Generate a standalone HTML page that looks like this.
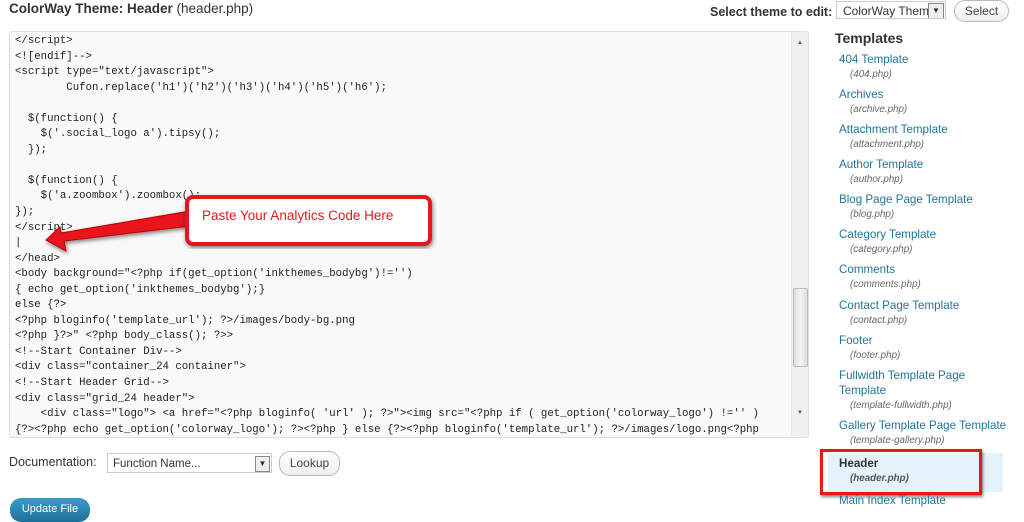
<!DOCTYPE html>
<html><head><style>
body{margin:0;width:1024px;height:512px;overflow:hidden;background:#fff;font-family:"Liberation Sans",sans-serif;position:relative}
.a{position:absolute;white-space:nowrap}
.code{position:absolute;left:9px;top:31px;width:798px;height:405px;border:1px solid #dfdfdf;border-radius:3px;background:#f9f9f9;overflow:hidden}
.code pre{margin:0;position:absolute;left:5px;top:2px;font-family:"Liberation Mono",monospace;font-size:10.7px;line-height:15.55px;color:#222}
.sb{position:absolute;left:781px;top:0;width:16px;height:405px;background:#f0f0f0;border-left:1px solid #e6e6e6}
.thumb{position:absolute;left:1px;top:256px;width:13px;height:77px;background:linear-gradient(90deg,#ddd,#f4f4f4,#ddd);border:1px solid #bbb;border-radius:2px}
.t{color:#21759b;font-size:11.6px}
.f{color:#666;font-size:9.8px;font-style:italic}
</style></head><body>
<div class="a" style="left:9px;top:1px;font-size:13.5px;color:#333"><b>ColorWay Theme: Header</b> (header.php)</div>
<div class="a" style="left:710px;top:5px;font-size:12.5px;color:#333;font-weight:bold">Select theme to edit:</div>
<div class="a" style="left:836px;top:1px;width:110px;height:18px;border:1px solid #ccc;background:#fff;font-size:12px;line-height:18px;padding-left:6px;box-sizing:border-box;color:#333;overflow:hidden">ColorWay Theme<span style="position:absolute;right:1px;top:1px;width:14px;height:14px;border:1px solid #888;background:#eee;font-size:8px;text-align:center;line-height:14px">▼</span></div>
<div class="a" style="left:954px;top:0;width:53px;height:20px;border:1px solid #bbb;border-radius:11px;background:linear-gradient(#fff,#eee);font-size:12px;line-height:20px;text-align:center;color:#464646">Select</div>
<div class="code"><pre>&lt;/script&gt;
&lt;![endif]--&gt;
&lt;script type="text/javascript"&gt;
        Cufon.replace('h1')('h2')('h3')('h4')('h5')('h6');

  $(function() {
    $('.social_logo a').tipsy();
  });

  $(function() {
    $('a.zoombox').zoombox();
});
&lt;/script&gt;
|
&lt;/head&gt;
&lt;body background="&lt;?php if(get_option('inkthemes_bodybg')!='')
{ echo get_option('inkthemes_bodybg');}
else {?&gt;
&lt;?php bloginfo('template_url'); ?&gt;/images/body-bg.png
&lt;?php }?&gt;" &lt;?php body_class(); ?&gt;&gt;
&lt;!--Start Container Div--&gt;
&lt;div class="container_24 container"&gt;
&lt;!--Start Header Grid--&gt;
&lt;div class="grid_24 header"&gt;
    &lt;div class="logo"&gt; &lt;a href="&lt;?php bloginfo( 'url' ); ?&gt;"&gt;&lt;img src="&lt;?php if ( get_option('colorway_logo') !='' )
{?&gt;&lt;?php echo get_option('colorway_logo'); ?&gt;&lt;?php } else {?&gt;&lt;?php bloginfo('template_url'); ?&gt;/images/logo.png&lt;?php</pre>
<div class="sb"><div style="position:absolute;left:5px;top:8px;font-size:6px;color:#555">▲</div><div class="thumb"></div><div style="position:absolute;left:5px;top:378px;font-size:6px;color:#555">▼</div></div>
</div>
<svg class="a" style="left:0;top:0" width="1024" height="512">
<defs><filter id="s"><feDropShadow dx="1" dy="2" stdDeviation="2" flood-opacity=".5"/></filter></defs>
<polygon points="190,211 190,226 64,241 66,251 46,240 60,227 61,233" fill="#e8171b" stroke="#b00" stroke-width="1" filter="url(#s)"/>
<rect x="187" y="197" width="243" height="47" rx="6" fill="#fff" stroke="#e8171b" stroke-width="4" filter="url(#s)"/>
</svg>
<div class="a" style="left:202px;top:208px;font-size:13.5px;color:#e8171b">Paste Your Analytics Code Here</div>
<div class="a" style="left:9px;top:455px;font-size:12.5px;color:#333">Documentation:</div>
<div class="a" style="left:107px;top:453px;width:165px;height:20px;border:1px solid #ccc;background:#fff;font-size:11.5px;line-height:20px;padding-left:5px;box-sizing:border-box;color:#333">Function Name...<span style="position:absolute;right:1px;top:2px;width:13px;height:14px;border:1px solid #888;background:#eee;font-size:8px;text-align:center;line-height:14px">▼</span></div>
<div class="a" style="left:279px;top:451px;width:59px;height:23px;border:1px solid #bbb;border-radius:11px;background:linear-gradient(#fff,#eee);font-size:12px;line-height:23px;text-align:center;color:#464646">Lookup</div>
<div class="a" style="left:10px;top:498px;width:80px;height:24px;border-radius:11px;background:linear-gradient(#3a9dc9,#1f6f98);color:#fff;font-size:11px;line-height:22px;text-align:center">Update File</div>
<div class="a" style="left:835px;top:30px;font-size:14px;font-weight:bold;color:#333">Templates</div>
<div class="a" style="left:828px;top:453px;width:175px;height:39px;background:#e4f2fc"></div>
<div class="a" style="left:820px;top:449px;width:156px;height:40px;border:3px solid #e8171b;box-shadow:1px 2px 3px rgba(0,0,0,.5)"></div>
<div class="a t" style="left:839px;top:53px">404 Template</div><div class="a f" style="left:850px;top:69px">(404.php)</div>
<div class="a t" style="left:839px;top:88px">Archives</div><div class="a f" style="left:850px;top:104px">(archive.php)</div>
<div class="a t" style="left:839px;top:123px">Attachment Template</div><div class="a f" style="left:850px;top:139px">(attachment.php)</div>
<div class="a t" style="left:839px;top:158px">Author Template</div><div class="a f" style="left:850px;top:174px">(author.php)</div>
<div class="a t" style="left:839px;top:193px">Blog Page Page Template</div><div class="a f" style="left:850px;top:209px">(blog.php)</div>
<div class="a t" style="left:839px;top:228px">Category Template</div><div class="a f" style="left:850px;top:244px">(category.php)</div>
<div class="a t" style="left:839px;top:263px">Comments</div><div class="a f" style="left:850px;top:279px">(comments.php)</div>
<div class="a t" style="left:839px;top:299px">Contact Page Template</div><div class="a f" style="left:850px;top:315px">(contact.php)</div>
<div class="a t" style="left:839px;top:334px">Footer</div><div class="a f" style="left:850px;top:350px">(footer.php)</div>
<div class="a t" style="left:839px;top:369px">Fullwidth Template Page</div><div class="a t" style="left:839px;top:384px">Template</div><div class="a f" style="left:850px;top:400px">(template-fullwidth.php)</div>
<div class="a t" style="left:839px;top:419px">Gallery Template Page Template</div><div class="a f" style="left:850px;top:435px">(template-gallery.php)</div>
<div class="a" style="left:839px;top:457px;font-size:11.6px;font-weight:bold;color:#333">Header</div><div class="a f" style="left:850px;top:473px;font-weight:bold;color:#555">(header.php)</div>
<div class="a t" style="left:839px;top:494px">Main Index Template</div>
</body></html>
